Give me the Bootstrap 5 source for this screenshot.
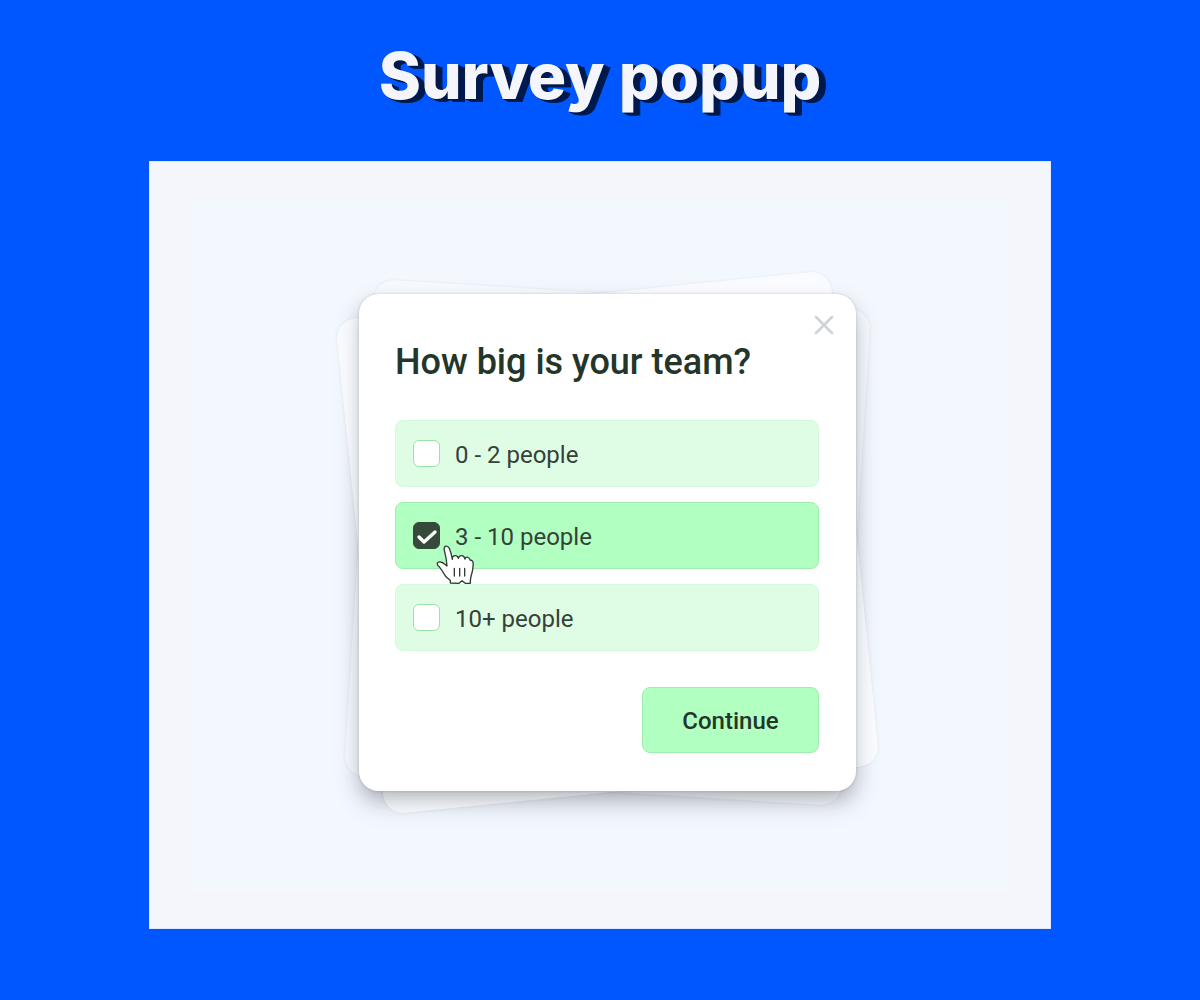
<!DOCTYPE html>
<html lang="en">
<head>
<meta charset="utf-8">
<meta name="viewport" content="width=device-width, initial-scale=1">
<title>Survey popup</title>
<link href="https://cdn.jsdelivr.net/npm/bootstrap@5.3.0/dist/css/bootstrap.min.css" rel="stylesheet">
<style>
  body { background: #0057ff; font-family: Roboto, "Liberation Sans", sans-serif; }
  main { padding-top: 38px; }
  .page-title { font: 800 64px/75px Inter, "Open Sans", sans-serif; color: #f5f6fc; text-shadow: 1px 1px #001a4d, 2px 1px #001a4d, 3px 2px #001a4d, 4px 2px #001a4d, 5px 3px #001a4d, 7px 3px #001a4d; margin-bottom: 48px; }
  .frame { max-width: 902px; background: #f5f6fc; padding: 38px 42px 36px; border: 1px solid #dfe9fd; }
  .stage { background: #f3f7fe; padding: 94px 0 101px 15px; }
  .deck { max-width: 497px; }
  .sheet { position: absolute; inset: 0; border-radius: 20px; }
  .sheet-back { background: rgba(255,255,255,.3); transform: rotate(3.6deg); box-shadow: 0 0 3px rgba(40,60,90,.08); }
  .sheet-mid { background: rgba(255,255,255,.5); transform: rotate(-5.8deg); box-shadow: 0 0 3px rgba(40,60,90,.09); }
  .sheet-shade { box-shadow: 0 12px 28px rgba(30,40,55,.16); }
  .popup { border-radius: 20px; padding: 48px 37px 38px 36px; background: #fff; box-shadow: 0 0 3px rgba(30,40,55,.18), 0 10px 20px -5px rgba(30,35,40,.3); }
  .question { font-size: 36px; line-height: 40px; font-weight: 500; color: #233629; margin-bottom: 38px; }
  .options { gap: 15px; }
  .option { height: 67px; padding: 0 17px; gap: 15px; border: 1px solid #d5fadb; border-radius: 8px; background: #dffde5; color: #354139; font-size: 24px; line-height: 28px; }
  .option:has(:checked) { background: #b1ffc1; border-color: #9deead; }
  .option span { padding-top: 2px; }
  .option .form-check-input { width: 27px; height: 27px; margin: 0; border: 1px solid #96e5a5; border-radius: 6px; background-color: #fff; flex: none; }
  .option .form-check-input:checked { background-color: #354a3a; border-color: #354a3a; background-size: 27px 27px; background-image: url("data:image/svg+xml,%3csvg xmlns='http://www.w3.org/2000/svg' viewBox='0 0 27 27'%3e%3cpath fill='none' stroke='%23fff' stroke-width='3.4' stroke-linecap='round' stroke-linejoin='round' d='M6 15l5 5L22 10'/%3e%3c/svg%3e"); }
  .btn-continue { width: 177px; height: 66px; margin-top: 36px; padding: 8px 12px 6px; border: 1px solid #9deead; border-radius: 8px; background: #b1ffc1; color: #233629; font-size: 24px; line-height: 28px; font-weight: 500; }
  .btn-dismiss { position: absolute; top: 16px; right: 17px; width: 30px; height: 30px; }
  .pointer { position: absolute; left: 39px; top: 41px; width: 39px; height: 41px; z-index: 2; pointer-events: none; }
</style>
</head>
<body>
<main class="container-fluid d-flex flex-column align-items-center pb-5">
  <h1 class="page-title text-center">Survey popup</h1>
  <section class="frame w-100">
    <div class="stage d-flex justify-content-center">
      <div class="deck w-100 position-relative">
        <div class="sheet sheet-shade"></div>
        <div class="sheet sheet-back"></div>
        <div class="sheet sheet-mid"></div>
        <form class="popup position-relative">
          <button type="button" class="btn btn-dismiss p-0 border-0 d-flex align-items-center justify-content-center" aria-label="Close">
            <svg width="20" height="20" viewBox="0 0 20 20" fill="none" stroke="#d0d3d6" stroke-width="2.6" stroke-linecap="round"><path d="M2 2 18 18M18 2 2 18"/></svg>
          </button>
          <h2 class="question">How big is your team?</h2>
          <div class="options d-flex flex-column">
            <label class="option d-flex align-items-center" for="team-small"><input class="form-check-input" type="checkbox" id="team-small"><span>0 - 2 people</span></label>
            <label class="option d-flex align-items-center position-relative" for="team-medium"><input class="form-check-input" type="checkbox" id="team-medium" checked><span>3 - 10 people</span>
              <svg class="pointer" viewBox="0 0 117 123" stroke="#303b34" stroke-width="4" stroke-linejoin="round" stroke-linecap="round" fill="#fff" aria-hidden="true">
                <path d="M46 117V109C38 103 30 98 26 88C22 80 19 76 14 70C3 61 5 52 17 54C25 55 30 62 36 66C35 48 32 34 28 19C25 5 37 2 43 13C48 25 50 36 52 46C51 34 66 30 70 43C73 32 87 32 90 45C92 36 102 38 106 49C117 47 115 63 113 77C111 90 106 99 106 111V118H91L81 110L72 118Z"/>
                <path fill="none" d="M58 73V96M74 73V96M89 73V96"/>
              </svg>
            </label>
            <label class="option d-flex align-items-center" for="team-large"><input class="form-check-input" type="checkbox" id="team-large"><span>10+ people</span></label>
          </div>
          <div class="d-flex justify-content-end">
            <button type="button" class="btn btn-continue">Continue</button>
          </div>
        </form>
      </div>
    </div>
  </section>
</main>
<script src="https://cdn.jsdelivr.net/npm/bootstrap@5.3.0/dist/js/bootstrap.bundle.min.js"></script>
</body>
</html>
